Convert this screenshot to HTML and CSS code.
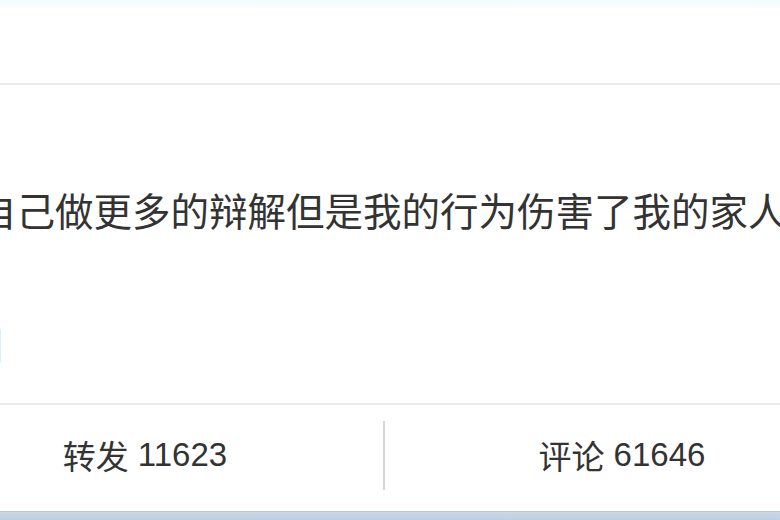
FILE: index.html
```html
<!DOCTYPE html>
<html lang="zh-CN">
<head>
<meta charset="utf-8">
<title>微博</title>
<link rel="stylesheet" href="styles.css">
</head>
<body>
<div class="page">
  <div class="top-band"></div>
  <div class="header"></div>
  <div class="rule"></div>
  <div class="content">
    <p class="text main">自己做更多的辩解但是我的行为伤害了我的家人</p>
    <p class="text tail">我们</p>
  </div>
  <div class="rule"></div>
  <div class="actions">
    <div class="action"><span class="label">转发</span> <span class="num">11623</span></div>
    <div class="action"><span class="label">评论</span> <span class="num">61646</span></div>
  </div>
  <div class="bottom-band"></div>
</div>
</body>
</html>
```
FILE: styles.css
```css
html, body {
  margin: 0;
  padding: 0;
  background: #ffffff;
}
.page {
  width: 780px;
  height: 520px;
  overflow: hidden;
  display: flex;
  flex-direction: column;
  font-family: "Liberation Sans", "Noto Sans CJK SC", sans-serif;
  color: #333333;
}
.top-band {
  height: 10px;
  flex: none;
  background: linear-gradient(#effcff, #ffffff);
}
.header {
  height: 73px;
  flex: none;
}
.rule {
  height: 2px;
  flex: none;
  background: #ebebeb;
}
.content {
  height: 318px;
  flex: none;
  display: flex;
  flex-direction: column;
}
.text {
  margin: 0;
  font-size: 38.5px;
  line-height: 50px;
  white-space: nowrap;
}
.main {
  margin-top: 103px;
  margin-left: -22px;
}
.tail {
  margin-top: 85px;
  margin-left: -74px;
  color: #888888;
}
.actions {
  height: 106px;
  flex: none;
  display: grid;
  grid-template-columns: 476px 476px;
  margin-left: -93px;
  align-items: center;
}
.action {
  height: 100%;
  display: flex;
  align-items: center;
  justify-content: center;
  gap: 9px;
  font-size: 33px;
  color: #333333;
  padding-bottom: 6px;
  box-sizing: border-box;
}
.action + .action {
  border-left: 2px solid #d6d6d6;
  border-image: linear-gradient(#ffffff 17px, #d6d6d6 17px, #d6d6d6 84px, #ffffff 84px) 1;
}
.bottom-band {
  flex: 1;
  border-top: 1px solid #b9c7d1;
  background: linear-gradient(#c8d9e6, #b9d0e6);
}
```
